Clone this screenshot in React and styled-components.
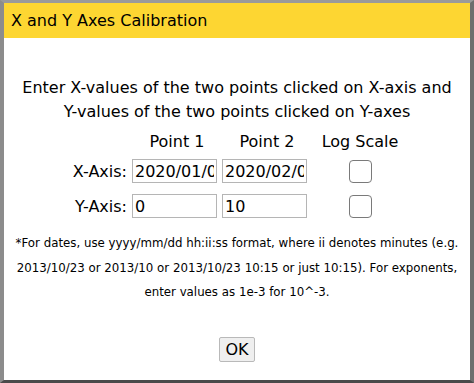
import React from 'react';
import styled, { createGlobalStyle } from 'styled-components';

const GlobalStyle = createGlobalStyle`
  html, body {
    margin: 0;
    padding: 0;
    background: #ffffff;
  }
  body {
    font-family: "DejaVu Sans", Verdana, sans-serif;
    color: #000;
  }
`;

const Dialog = styled.div`
  box-sizing: border-box;
  width: 474px;
  height: 383px;
  background: #ffffff;
  border-top: 3px solid #9a9a9a;
  border-left: 4px solid #8c8c8c;
  border-right: 4px solid #6e6e6e;
  border-bottom: 3px solid #4a4a4a;
  display: flex;
  flex-direction: column;
  overflow: hidden;
`;

const TitleBar = styled.div`
  height: 35px;
  background: #fdd632;
  display: flex;
  align-items: center;
  padding-left: 7px;
  font-size: 16px;
`;

const Body = styled.div`
  flex: 1;
  display: flex;
  flex-direction: column;
  align-items: center;
  padding-top: 38px;
`;

const Intro = styled.p`
  margin: 0;
  font-size: 16px;
  line-height: 24px;
  text-align: center;
`;

const Grid = styled.div`
  align-self: flex-start;
  display: grid;
  grid-template-columns: 128px 90px 90px 96px;
  grid-template-rows: 12px 24px 24px;
  align-items: center;
  row-gap: 11px;
  margin-top: 12px;
  font-size: 16px;
`;

const Header = styled.div`
  text-align: center;
  line-height: 12px;
  white-space: nowrap;
`;

const Label = styled.div`
  text-align: right;
  padding-right: 5px;
`;

const Field = styled.input`
  box-sizing: border-box;
  width: 85px;
  height: 24px;
  border: 1px solid #b5b5b5;
  padding: 1px 2px;
  font-family: "DejaVu Sans", Verdana, sans-serif;
  font-size: 16px;
  color: #000;
  outline: none;
`;

const CheckCell = styled.div`
  display: flex;
  justify-content: center;
`;

const Check = styled.span`
  box-sizing: border-box;
  width: 23px;
  height: 23px;
  border: 1px solid #7a7a7a;
  border-radius: 4px;
  background: #fff;
`;

const Note = styled.p`
  margin: 13px 0 0;
  font-size: 11.8px;
  line-height: 24.5px;
  text-align: center;
  white-space: nowrap;
`;

const OkButton = styled.button`
  margin-top: 32px;
  font-family: "DejaVu Sans", Verdana, sans-serif;
  font-size: 16px;
  padding: 2px 5px;
  background: #efefef;
  border: 1px solid #b9b9b9;
  border-radius: 2px;
  color: #000;
`;

const rows = [
  { label: 'X-Axis:', a: '2020/01/01', b: '2020/02/01' },
  { label: 'Y-Axis:', a: '0', b: '10' },
];

export default function App() {
  return (
    <>
      <GlobalStyle />
      <Dialog>
        <TitleBar>X and Y Axes Calibration</TitleBar>
        <Body>
          <Intro>
            Enter X-values of the two points clicked on X-axis and
            <br />
            Y-values of the two points clicked on Y-axes
          </Intro>
          <Grid>
            <div />
            <Header>Point 1</Header>
            <Header>Point 2</Header>
            <Header>Log Scale</Header>
            {rows.map(r => (
              <React.Fragment key={r.label}>
                <Label>{r.label}</Label>
                <Field defaultValue={r.a} />
                <Field defaultValue={r.b} />
                <CheckCell><Check /></CheckCell>
              </React.Fragment>
            ))}
          </Grid>
          <Note>
            *For dates, use yyyy/mm/dd hh:ii:ss format, where ii denotes minutes (e.g.
            <br />
            2013/10/23 or 2013/10 or 2013/10/23 10:15 or just 10:15). For exponents,
            <br />
            enter values as 1e-3 for 10^-3.
          </Note>
          <OkButton>OK</OkButton>
        </Body>
      </Dialog>
    </>
  );
}
